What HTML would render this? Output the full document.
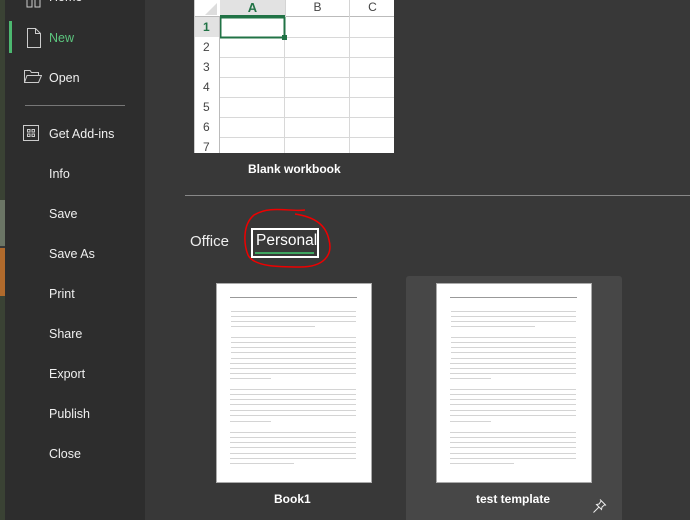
<!DOCTYPE html>
<html><head><meta charset="utf-8"><style>
*{margin:0;padding:0;box-sizing:border-box}
html,body{width:690px;height:520px;overflow:hidden}
body{background:#383838;font-family:"Segoe UI","Liberation Sans",sans-serif;color:#fff;position:relative}
.abs{position:absolute}
.side{left:5px;top:0;width:140px;height:520px;background:#2d2d2d}
.item{position:absolute;left:49px;font-size:12.5px;color:#f0f0f0}
.rh{position:absolute;left:0;width:25px;height:20px;font-size:12px;color:#444;padding-left:8px;line-height:20px;background:#fff;border-right:1px solid #bbb}
</style></head><body>
<div class="abs" style="left:0;top:0;width:5px;height:200px;background:#3a4234"></div>
<div class="abs" style="left:0;top:200px;width:5px;height:46px;background:#6b7565"></div>
<div class="abs" style="left:0;top:248px;width:5px;height:48px;background:#b06a2c"></div>
<div class="abs" style="left:0;top:296px;width:5px;height:224px;background:#3a4234"></div>
<div class="abs side"></div>
<div class="abs" style="left:9px;top:21px;width:3px;height:32px;background:#4cb870"></div>
<svg class="abs" style="left:24px;top:-6px" width="20" height="14"><rect x="3" y="0" width="5" height="13" fill="none" stroke="#ccc"/><rect x="11" y="0" width="5" height="13" fill="none" stroke="#ccc"/></svg>
<div class="item" style="top:-10px">Home</div>
<svg class="abs" style="left:26px;top:28px" width="16" height="20"><path d="M1.5 0.5H9.5L14.5 5.5V19.5H1.5Z M9.5 0.5V5.5H14.5" fill="none" stroke="#ccc"/></svg>
<div class="item" style="top:31px;color:#5cc57e">New</div>
<svg class="abs" style="left:24px;top:70px" width="18" height="14"><path d="M0.5 12.5V0.5H6l1.5 2H14.5V5 M0.5 12.5L3 5.5H17.5L14.5 12.5Z" fill="none" stroke="#ccc"/></svg>
<div class="item" style="top:71px">Open</div>
<div class="abs" style="left:25px;top:105px;width:100px;height:1px;background:#777"></div>
<svg class="abs" style="left:23px;top:125px" width="16" height="16"><rect x="0.5" y="0.5" width="15" height="15" fill="none" stroke="#ccc"/><rect x="4.5" y="4.5" width="2.5" height="2.5" fill="none" stroke="#ccc"/><rect x="9" y="4.5" width="2.5" height="2.5" fill="none" stroke="#ccc"/><rect x="4.5" y="9" width="2.5" height="2.5" fill="none" stroke="#ccc"/><rect x="9" y="9" width="2.5" height="2.5" fill="none" stroke="#ccc"/></svg>
<div class="item" style="top:127px">Get Add-ins</div>
<div class="item" style="top:167px">Info</div>
<div class="item" style="top:207px">Save</div>
<div class="item" style="top:247px">Save As</div>
<div class="item" style="top:287px">Print</div>
<div class="item" style="top:327px">Share</div>
<div class="item" style="top:367px">Export</div>
<div class="item" style="top:407px">Publish</div>
<div class="item" style="top:447px">Close</div>

<div class="abs" style="left:194px;top:0;width:200px;height:153px;background:#fff;overflow:hidden;border-left:1px solid #ccc">
 <div class="abs" style="left:0;top:0;width:200px;height:17px;background:#fff;border-bottom:1px solid #bbb"></div>
 <div class="abs" style="left:25px;top:0;width:65px;height:17px;background:#e2e2e2;border-bottom:2px solid #217346;font-size:13px;color:#217346;text-align:center;line-height:15px;font-weight:bold">A</div>
 <div class="abs" style="left:90px;top:0;width:64px;height:17px;font-size:12px;color:#444;text-align:center;line-height:15px;border-left:1px solid #d4d4d4">B</div>
 <div class="abs" style="left:154px;top:0;width:46px;height:17px;font-size:12px;color:#444;text-align:center;line-height:15px;border-left:1px solid #d4d4d4">C</div>
 <svg class="abs" style="left:10px;top:3px" width="12" height="12"><path d="M12 0V12H0Z" fill="#ddd"/></svg>
 <div class="rh" style="top:17px;background:#e2e2e2;color:#217346;font-weight:bold">1</div>
 <div class="rh" style="top:37px">2</div><div class="rh" style="top:57px">3</div><div class="rh" style="top:77px">4</div><div class="rh" style="top:97px">5</div><div class="rh" style="top:117px">6</div><div class="rh" style="top:137px">7</div>
 <svg class="abs" style="left:25px;top:17px" width="175" height="136"><g stroke="#d8d8d8"><path d="M0 20.5H175M0 40.5H175M0 60.5H175M0 80.5H175M0 100.5H175M0 120.5H175M64.5 0V136M129.5 0V136"/></g><rect x="0.5" y="0.5" width="64" height="20" fill="none" stroke="#217346" stroke-width="2"/><rect x="62" y="18" width="5" height="5" fill="#217346"/></svg>
</div>
<div class="abs" style="left:248px;top:162px;font-size:12px;font-weight:bold">Blank workbook</div>
<div class="abs" style="left:185px;top:195px;width:505px;height:1px;background:#888"></div>
<div class="abs" style="left:190px;top:233px;font-size:15px;color:#eee">Office</div>
<div class="abs" style="left:251px;top:228px;width:68px;height:30px;border:2px solid #fff"></div>
<div class="abs" style="left:256px;top:232px;font-size:15.5px;color:#fff">Personal</div>
<div class="abs" style="left:255px;top:252px;width:59px;height:2px;background:#3fa560"></div>
<svg class="abs" style="left:240px;top:205px" width="100" height="70"><path d="M65 5C50 7 30 0 14 10C2 20 4 40 8 50C14 62 40 62 60 62C84 62 93 50 89 35C86 20 75 12 55 9" fill="none" stroke="#e00" stroke-width="1.5"/></svg>

<div class="abs" style="left:406px;top:276px;width:216px;height:244px;background:#474747;border-radius:3px 3px 0 0"></div>
<svg class="abs" style="left:216px;top:283px" width="156" height="200"><rect x="0.5" y="0.5" width="155" height="199" fill="#fff" stroke="#aaa"/><path d="M14 14.5H141" stroke="#999"/><g stroke="#d4d4d4"><path d="M15 28.5H140M15 33.5H140M15 38.5H140M15 43.5H99M15 54.5H140M15 59.5H140M15 64.5H140M15 69.5H140M15 75.5H140M14 80.5H140M14 85.5H140M14 90.5H140M14 95.5H55M14 106.5H140M14 111.5H140M14 116.5H140M14 121.5H140M14 127.5H140M14 132.5H140M14 138.5H55M14 149.5H140M14 154.5H140M14 159.5H140M14 164.5H140M14 170.5H140M14 175.5H140M14 180.5H78"/></g></svg>
<svg class="abs" style="left:436px;top:283px" width="156" height="200"><rect x="0.5" y="0.5" width="155" height="199" fill="#fff" stroke="#aaa"/><path d="M14 14.5H141" stroke="#999"/><g stroke="#d4d4d4"><path d="M15 28.5H140M15 33.5H140M15 38.5H140M15 43.5H99M15 54.5H140M15 59.5H140M15 64.5H140M15 69.5H140M15 75.5H140M14 80.5H140M14 85.5H140M14 90.5H140M14 95.5H55M14 106.5H140M14 111.5H140M14 116.5H140M14 121.5H140M14 127.5H140M14 132.5H140M14 138.5H55M14 149.5H140M14 154.5H140M14 159.5H140M14 164.5H140M14 170.5H140M14 175.5H140M14 180.5H78"/></g></svg>
<div class="abs" style="left:274px;top:492px;font-size:12px;font-weight:bold">Book1</div>
<div class="abs" style="left:476px;top:492px;font-size:12px;font-weight:bold">test template</div>
<svg class="abs" style="left:592px;top:498px" width="16" height="16"><path d="M8 1.5L14 7.5M9.5 2.5L7 6L4.5 6.5L9.5 11.5L10 9L13 6.5M7 9L1.5 14.5" fill="none" stroke="#eee"/></svg>
</body></html>
